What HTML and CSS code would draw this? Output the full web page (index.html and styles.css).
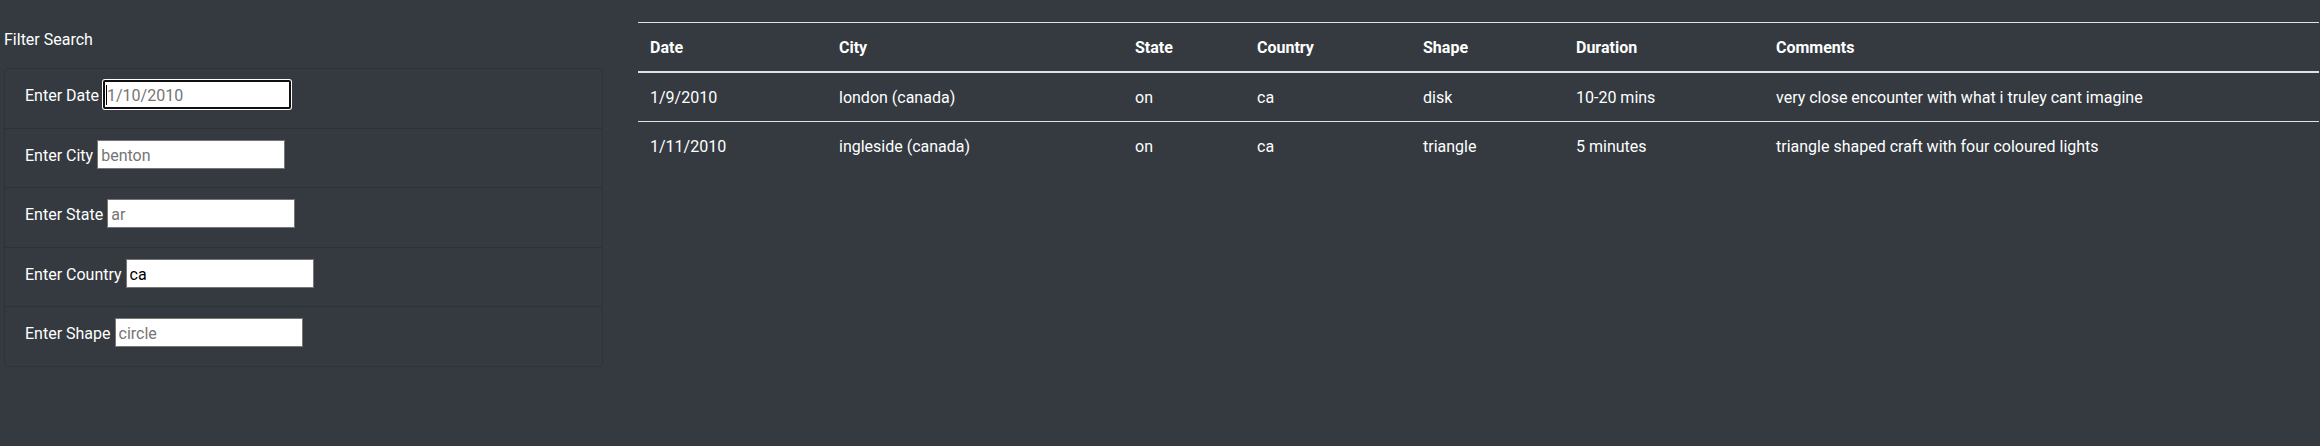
FILE: index.html
```html
<!DOCTYPE html>
<html lang="en">
<head>
<meta charset="utf-8">
<title>UFO Sightings</title>
<link rel="stylesheet" href="styles.css">
</head>
<body>
<div class="page">
  <aside class="sidebar">
    <div class="sidebar-title">Filter Search</div>
    <ul class="filters">
      <li class="filter-item">
        <label class="filter-label" for="f-date">Enter Date</label>
        <span class="input-wrap">
          <input class="filter-input is-focused" id="f-date" type="text" placeholder="1/10/2010">
          <span class="caret"></span>
        </span>
      </li>
      <li class="filter-item">
        <label class="filter-label" for="f-city">Enter City</label>
        <input class="filter-input" id="f-city" type="text" placeholder="benton">
      </li>
      <li class="filter-item">
        <label class="filter-label" for="f-state">Enter State</label>
        <input class="filter-input" id="f-state" type="text" placeholder="ar">
      </li>
      <li class="filter-item">
        <label class="filter-label" for="f-country">Enter Country</label>
        <input class="filter-input" id="f-country" type="text" value="ca">
      </li>
      <li class="filter-item">
        <label class="filter-label" for="f-shape">Enter Shape</label>
        <input class="filter-input" id="f-shape" type="text" placeholder="circle">
      </li>
    </ul>
  </aside>
  <main class="results">
    <table class="ufo-table">
      <colgroup>
        <col class="c-date">
        <col class="c-city">
        <col class="c-state">
        <col class="c-country">
        <col class="c-shape">
        <col class="c-duration">
        <col class="c-comments">
      </colgroup>
      <thead>
        <tr>
          <th>Date</th>
          <th>City</th>
          <th>State</th>
          <th>Country</th>
          <th>Shape</th>
          <th>Duration</th>
          <th>Comments</th>
        </tr>
      </thead>
      <tbody>
        <tr>
          <td>1/9/2010</td>
          <td>london (canada)</td>
          <td>on</td>
          <td>ca</td>
          <td>disk</td>
          <td>10-20 mins</td>
          <td>very close encounter with what i truley cant imagine</td>
        </tr>
        <tr>
          <td>1/11/2010</td>
          <td>ingleside (canada)</td>
          <td>on</td>
          <td>ca</td>
          <td>triangle</td>
          <td>5 minutes</td>
          <td>triangle shaped craft with four coloured lights</td>
        </tr>
      </tbody>
    </table>
  </main>
</div>
</body>
</html>
```
FILE: styles.css
```css
html, body {
  margin: 0;
  padding: 0;
  background: #343a40;
}

body {
  font-family: Roboto, "Liberation Sans", sans-serif;
  font-size: 16px;
  line-height: 24px;
  color: #ffffff;
  width: 2320px;
  height: 446px;
  overflow: hidden;
}

.page {
  display: flex;
  align-items: flex-start;
  padding-left: 4px;
}

.sidebar {
  width: 599px;
  flex: none;
  padding-top: 28px;
}

.sidebar-title {
  line-height: 24px;
  margin-bottom: 16px;
}

.filters {
  list-style: none;
  margin: 0;
  padding: 0;
  border: 1px solid #2e3338;
  border-radius: 4px;
}

.filter-item {
  box-sizing: border-box;
  height: 59.6px;
  padding: 11px 20px 0;
  border-bottom: 1px solid #2e3338;
  display: flex;
  align-items: flex-start;
}

.filter-item:last-child {
  border-bottom: none;
  height: 58.6px;
}

.filter-label {
  padding-top: 1px;
  line-height: 30px;
  margin-right: 4px;
  color: #ffffff;
}

.input-wrap {
  position: relative;
  display: inline-flex;
}

.filter-input {
  box-sizing: border-box;
  width: 188px;
  height: 29px;
  margin: 0;
  padding: 2px 3px 0;
  border: 1px solid #767676;
  border-radius: 0;
  background: #ffffff;
  font-family: Roboto, "Liberation Sans", sans-serif;
  font-size: 16px;
  color: #000000;
  outline: none;
}

.filter-input::placeholder {
  color: #757575;
  opacity: 1;
}

.filter-input.is-focused {
  border: 2px solid #101010;
  padding: 1px 2px 0;
  border-radius: 2px;
  box-shadow: 0 0 0 1px #ffffff;
}

.caret {
  position: absolute;
  left: 3px;
  top: 5px;
  width: 1px;
  height: 20px;
  background: #000000;
}

.results {
  flex: 1;
  margin-left: 35px;
  padding-top: 22px;
}

.ufo-table {
  width: 1681px;
  table-layout: fixed;
  border-collapse: collapse;
  border-spacing: 0;
  color: #ffffff;
}

.c-date { width: 189px; }
.c-city { width: 296px; }
.c-state { width: 122px; }
.c-country { width: 166px; }
.c-shape { width: 153px; }
.c-duration { width: 200px; }
.c-comments { width: 555px; }

.ufo-table th,
.ufo-table td {
  padding: 13px 12px 11px;
  line-height: 24px;
  text-align: left;
  vertical-align: top;
  border-top: 1px solid #dee2e6;
  white-space: nowrap;
}

.ufo-table th {
  font-weight: 700;
  border-bottom: 2px solid #dee2e6;
}

.ufo-table td {
  font-weight: 400;
}
```
